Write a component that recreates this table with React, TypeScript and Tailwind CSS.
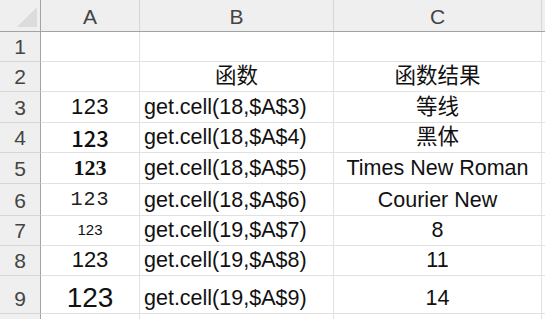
import React from "react";

const SANS = "font-['Liberation_Sans','Noto_Sans_CJK_SC',sans-serif]";

type Row = {
  n: string;
  h: string;
  a?: React.ReactNode;
  aCls?: string;
  b?: string;
  bCenter?: boolean;
  c?: string;
};

const rows: Row[] = [
  { n: "1", h: "h-[30px]" },
  { n: "2", h: "h-[30px]", b: "函数", bCenter: true, c: "函数结果" },
  { n: "3", h: "h-[31px]", a: "123", aCls: "font-['Liberation_Sans',sans-serif] text-[22px] tracking-[0.5px]", b: "get.cell(18,$A$3)", c: "等线" },
  { n: "4", h: "h-[30px]", a: "123", aCls: "font-['Noto_Sans_CJK_SC',sans-serif] font-medium text-[22px]", b: "get.cell(18,$A$4)", c: "黑体" },
  { n: "5", h: "h-[31px]", a: "123", aCls: "font-['Liberation_Serif',serif] font-bold text-[22px]", b: "get.cell(18,$A$5)", c: "Times New Roman" },
  { n: "6", h: "h-[32px]", a: "123", aCls: "font-['Liberation_Mono',monospace] text-[20px] tracking-[1px] text-[#222]", b: "get.cell(18,$A$6)", c: "Courier New" },
  { n: "7", h: "h-[30px]", a: "123", aCls: "font-['Liberation_Sans',sans-serif] text-[15px]", b: "get.cell(19,$A$7)", c: "8" },
  { n: "8", h: "h-[30px]", a: "123", aCls: "font-['Liberation_Sans',sans-serif] text-[22px]", b: "get.cell(19,$A$8)", c: "11" },
  { n: "9", h: "h-[38px]", a: "123", aCls: "font-['Liberation_Sans',sans-serif] text-[28px]", b: "get.cell(19,$A$9)", c: "14" },
];

export default function App() {
  return (
    <div className={`w-[545px] h-[319px] overflow-hidden bg-white text-[#111] ${SANS}`}>
      {/* header row */}
      <div className="flex h-[32px] bg-[#efefef] border-b border-[#a3a3a3]">
        <div className="relative w-[41px] shrink-0 border-r border-[#a3a3a3]">
          <div className="absolute right-[3px] bottom-[4px] w-0 h-0 border-l-[20px] border-l-transparent border-b-[20px] border-b-[#dcdcdc]" />
        </div>
        <div className="w-[99px] shrink-0 border-r border-[#d6d6d6] flex items-end justify-center pb-[2px] text-[21px] leading-[24px] text-[#444]">A</div>
        <div className="w-[194px] shrink-0 border-r border-[#d6d6d6] flex items-end justify-center pb-[2px] text-[21px] leading-[24px] text-[#444]">B</div>
        <div className="w-[208px] shrink-0 border-r border-[#d6d6d6] flex items-end justify-center pb-[2px] text-[21px] leading-[24px] text-[#444]">C</div>
        <div className="flex-1" />
      </div>
      {rows.map((r) => (
        <div key={r.n} className={`flex ${r.h}`}>
          <div className="w-[41px] shrink-0 bg-[#efefef] border-r border-[#a3a3a3] border-b border-b-[#d6d6d6] flex items-end justify-center pb-[2px] text-[21px] leading-[24px] text-[#444]">
            {r.n}
          </div>
          <div className={`w-[99px] shrink-0 border-r border-b border-[#e1e1e1] flex items-end justify-center pb-[2px] leading-[26px] whitespace-nowrap ${r.aCls ?? ""}`}>
            {r.a}
          </div>
          <div className={`w-[194px] shrink-0 border-r border-b border-[#e1e1e1] flex items-end pb-[2px] text-[21.5px] leading-[26px] whitespace-nowrap ${r.bCenter ? "justify-center" : "pl-[4px]"}`}>
            {r.b}
          </div>
          <div className="w-[208px] shrink-0 border-r border-b border-[#e1e1e1] flex items-end justify-center pb-[2px] text-[21.5px] leading-[26px] whitespace-nowrap">
            {r.c}
          </div>
          <div className="flex-1 border-b border-[#e1e1e1]" />
        </div>
      ))}
      <div className="flex h-[20px]">
        <div className="w-[41px] shrink-0 bg-[#efefef] border-r border-[#a3a3a3]" />
        <div className="w-[99px] shrink-0 border-r border-[#e1e1e1]" />
        <div className="w-[194px] shrink-0 border-r border-[#e1e1e1]" />
        <div className="w-[208px] shrink-0 border-r border-[#e1e1e1]" />
        <div className="flex-1" />
      </div>
    </div>
  );
}
